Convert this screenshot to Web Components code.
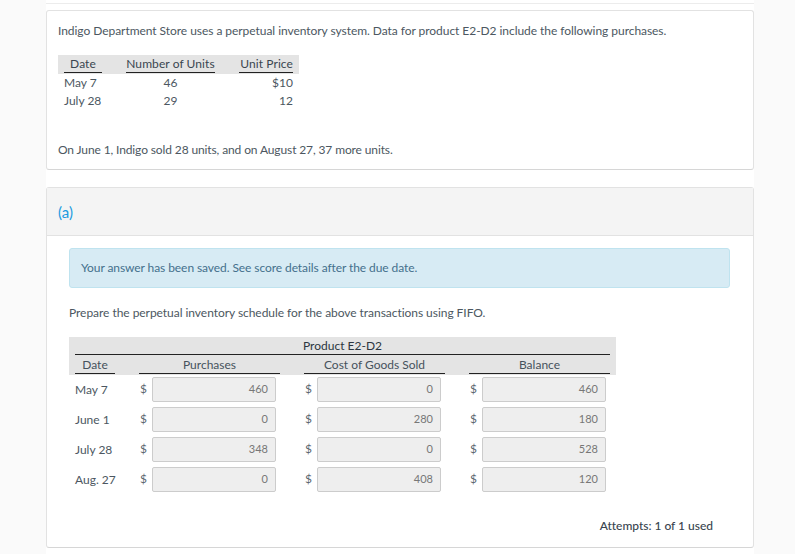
<!DOCTYPE html>
<html>
<head>
<meta charset="utf-8">
<title>Perpetual inventory</title>
<style>
html,body{margin:0;padding:0;background:#fafafa;}
body{font-family:Lato,"Liberation Sans",sans-serif;font-size:12px;color:#4c5761;}
main{display:block;box-sizing:border-box;width:708px;height:554px;margin:0 0 0 46px;padding-top:10px;background:#fff;position:relative;}
main hr{position:absolute;left:0;right:0;top:3px;margin:0;border:0;border-top:1px solid #ececec;}
</style>
</head>
<body>
<main>
  <hr>
  <q-panel>
    <p-text style="letter-spacing:-.05px">Indigo Department Store uses a perpetual inventory system. Data for product E2-D2 include the following purchases.</p-text>
    <purchase-table></purchase-table>
    <p-text class="after" style="letter-spacing:-.12px">On June 1, Indigo sold 28 units, and on August 27, 37 more units.</p-text>
  </q-panel>
  <part-panel label="(a)">
    <saved-note>Your answer has been saved. See score details after the due date.</saved-note>
    <p-text class="lead" style="letter-spacing:-.045px">Prepare the perpetual inventory schedule for the above transactions using FIFO.</p-text>
    <fifo-table></fifo-table>
    <attempts-line>Attempts: 1 of 1 used</attempts-line>
  </part-panel>
</main>

<script>
const define = (name, css, html) => customElements.define(name, class extends HTMLElement {
  constructor(){ super(); this.attachShadow({mode:'open'}); this.shadowRoot.innerHTML = `<style>${css}</style>${html(this)}`; }
});

define('q-panel', `
:host{display:block;height:158px;background:#fff;border:1px solid #e2e2e2;border-bottom-color:#d6d6d6;border-radius:3px;}
.in{padding:12px 11px 0;}
::slotted(.after){margin-top:32px;}
`, () => `<div class="in"><slot></slot></div>`);

define('p-text', `:host{display:block;line-height:15px;font-size:12px;white-space:nowrap;}`, () => `<slot></slot>`);

define('purchase-table', `
:host{display:grid;width:241px;margin-top:17px;grid-template-columns:38px 1fr 60px;line-height:18px;font-size:12px;}
.hd,.rw{grid-column:1/-1;display:grid;grid-template-columns:subgrid;}
.hd{background:#e4e4e4;height:19px;}
.hd span{height:17px;line-height:18px;border-bottom:1px solid #222;white-space:nowrap;color:#3a4650;letter-spacing:.08px;}
.d{margin-left:6px;text-align:center;width:38px;}
.n{justify-self:center;margin-left:6px;width:89px;text-align:center;}
.u{justify-self:end;margin-right:6px;width:54px;text-align:right;}
.rw span{white-space:nowrap;}
.rw .ld{padding-left:6px;}
.rw .mid{text-align:center;padding-left:6px;}
.rw .pr{text-align:right;padding-right:6px;}
`, () => `
<div class="hd"><span class="d">Date</span><span class="n">Number of Units</span><span class="u">Unit Price</span></div>
<div class="rw"><span class="ld">May 7</span><span class="mid">46</span><span class="pr">$10</span></div>
<div class="rw"><span class="ld">July 28</span><span class="mid">29</span><span class="pr">12</span></div>`);

define('part-panel', `
:host{display:block;height:359px;margin-top:17px;background:#fff;border:1px solid #e2e2e2;border-bottom-color:#d6d6d6;border-radius:3px;}
header{height:47px;background:#f4f4f4;border-bottom:1px solid #e2e2e2;color:#1b9be0;font-size:15px;line-height:49px;padding-left:11px;}
.body{padding:12px 23px 0 22px;}
::slotted(.lead){margin-top:17px;}
`, el => `<header>${el.getAttribute('label')}</header><div class="body"><slot></slot></div>`);

define('saved-note', `
:host{display:block;height:38px;background:#d7ebf4;border:1px solid #bfe3ef;border-radius:3px;color:#44708c;line-height:37px;padding-left:11px;font-size:12px;letter-spacing:-.08px;}
`, () => `<slot></slot>`);

customElements.define('money-cell', class extends HTMLElement {
  constructor(){ super(); this.attachShadow({mode:'open'});
    this.shadowRoot.innerHTML = `<style>
:host{display:flex;align-items:center;height:30px;width:141px;}
span{width:13px;color:#5d6870;padding-left:1px;box-sizing:border-box;position:relative;top:-1px;}
div{width:124px;height:25px;box-sizing:border-box;background:#eee;border:1px solid #ccc;border-radius:2px;text-align:right;line-height:22px;padding-right:7px;font-size:11px;color:#777;}
</style><span>$</span><div>${this.getAttribute('v')}</div>`;
  }
});

customElements.define('fifo-table', class extends HTMLElement {
  constructor(){ super(); this.attachShadow({mode:'open'});
    const rows = [['May 7',460,0,460],['June 1',0,280,180],['July 28',348,0,528],['Aug. 27',0,408,120]];
    this.shadowRoot.innerHTML = `<style>
:host{display:block;width:547px;margin-top:17px;font-size:12px;}
.top{background:#e4e4e4;height:38px;padding:0 6px;box-sizing:border-box;}
.prod{height:17px;line-height:17px;text-align:center;border-bottom:1px solid #222;color:#2c3640;}
.cols,.row{display:grid;grid-template-columns:40px 141px 141px 141px;column-gap:24px;}
.cols span{height:18px;line-height:20px;text-align:center;border-bottom:1px solid #222;color:#46525c;}
.rows{padding:0 6px;margin-top:-1px;}
.row{height:30px;align-items:center;}
.row b{font-weight:400;white-space:nowrap;}
</style>
<div class="top"><div class="prod">Product E2-D2</div>
<div class="cols"><span>Date</span><span>Purchases</span><span>Cost of Goods Sold</span><span>Balance</span></div></div>
<div class="rows">${rows.map(r => `<div class="row"><b>${r[0]}</b><money-cell v="${r[1]}"></money-cell><money-cell v="${r[2]}"></money-cell><money-cell v="${r[3]}"></money-cell></div>`).join('')}</div>`;
  }
});

define('attempts-line', `:host{display:block;margin-top:24px;text-align:right;padding-right:17px;line-height:15px;color:#39454f;font-size:12px;font-weight:500;letter-spacing:-.02px;}`, () => `<slot></slot>`);
</script>
</body>
</html>
